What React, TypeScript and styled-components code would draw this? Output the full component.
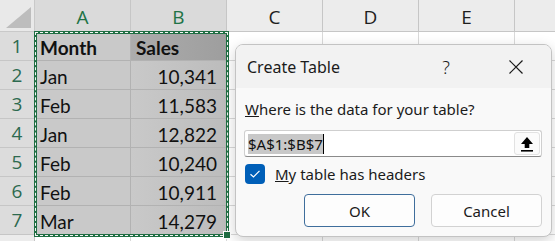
import styled, { createGlobalStyle } from 'styled-components';

const GlobalStyle = createGlobalStyle`
  html, body {
    margin: 0;
    padding: 0;
    background: #ffffff;
    overflow: hidden;
  }
`;

// F is off the right edge, so its header stays blank
const columns = ['A', 'B', 'C', 'D', 'E', ''];

const rows: [string, string][] = [
    ['Month', 'Sales'],
    ['Jan', '10,341'],
    ['Feb', '11,583'],
    ['Jan', '12,822'],
    ['Feb', '10,240'],
    ['Feb', '10,911'],
    ['Mar', '14,279'],
    ['', ''],
];

function App() {
    return (
        <Sheet>
            <GlobalStyle/>
            <Grid>
                <Corner/>
                {columns.map((c, i) => (
                    <ColHeader key={i} $selected={i < 2}>{c}</ColHeader>
                ))}
                {rows.map((r, ri) => (
                    <Row key={ri} r={r} index={ri}/>
                ))}
            </Grid>

            <Selection>
                <FillHandle/>
            </Selection>

            <Dialog>
                <TitleBar>
                    <Title>Create Table</Title>
                    <TitleButton>?</TitleButton>
                    <TitleButton>
                        <svg width="16" height="16" viewBox="0 0 16 16">
                            <path d="M1.5 1.5 L14.5 14.5 M14.5 1.5 L1.5 14.5" stroke="#1b1b1b" strokeWidth="1.2"/>
                        </svg>
                    </TitleButton>
                </TitleBar>
                <Body>
                    <Label><u>W</u>here is the data for your table?</Label>
                    <RangeBox>
                        <RangeText>$A$1:$B$7</RangeText>
                        <Caret/>
                        <CollapseButton>
                            <svg width="14" height="16" viewBox="0 0 14 16">
                                <path d="M7 1 L13 8 H9.3 V12 H4.7 V8 H1 Z" fill="#000"/>
                                <rect x="1" y="14" width="12" height="1.6" fill="#000"/>
                            </svg>
                        </CollapseButton>
                    </RangeBox>
                    <CheckRow>
                        <CheckBox>
                            <svg width="12" height="10" viewBox="0 0 12 10">
                                <path d="M1.5 5.2 L4.5 8 L10.5 1.8" stroke="#fff" strokeWidth="1.2" fill="none"/>
                            </svg>
                        </CheckBox>
                        <CheckLabel><u>M</u>y table has headers</CheckLabel>
                    </CheckRow>
                    <Buttons>
                        <Button $primary>OK</Button>
                        <Button>Cancel</Button>
                    </Buttons>
                </Body>
            </Dialog>
        </Sheet>
    );
}

function Row({r, index}: { r: [string, string]; index: number }) {
    const inSel = index < 7;
    return (
        <>
            <RowHeader $selected={inSel}>{inSel ? index + 1 : ''}</RowHeader>
            <Cell $selected={inSel} $bold={index === 0}>{r[0]}</Cell>
            <Cell $selected={inSel} $bold={index === 0} $active={index === 0} $num={index > 0} $shade={inSel}>{r[1]}</Cell>
            <Cell/>
            <Cell/>
            <Cell/>
            <Cell/>
        </>
    );
}

export default App;

const Sheet = styled.div`
  position: relative;
  width: 555px;
  height: 241px;
  overflow: hidden;
  font-family: Lato, "Liberation Sans", sans-serif;
`;

const Grid = styled.div`
  display: grid;
  grid-template-columns: 35px repeat(6, 96px);
  grid-template-rows: 32px repeat(8, 29px);
`;

const Corner = styled.div`
  position: relative;
  background: #e9e9e9;
  border-right: 1px solid #c9c9c9;
  border-bottom: 1px solid #c9c9c9;

  &::after {
    content: '';
    position: absolute;
    right: 3px;
    bottom: 3px;
    width: 0;
    height: 0;
    border-left: 25px solid transparent;
    border-bottom: 21px solid #bdbdbd;
  }
`;

const ColHeader = styled.div<{ $selected?: boolean }>`
  display: flex;
  align-items: center;
  justify-content: center;
  padding-top: 2px;
  box-sizing: border-box;
  font-family: "Open Sans", "Noto Sans", sans-serif;
  font-size: 19px;
  color: ${p => p.$selected ? '#217346' : '#1e1e1e'};
  background: ${p => p.$selected ? '#dadada' : '#ececec'};
  border-right: 1px solid #c6c6c6;
  border-bottom: 1px solid #c6c6c6;
`;

const RowHeader = styled.div<{ $selected?: boolean }>`
  display: flex;
  align-items: center;
  justify-content: center;
  font-family: "Open Sans", "Noto Sans", sans-serif;
  font-size: 19px;
  color: ${p => p.$selected ? '#2d6a4f' : '#333'};
  background: ${p => p.$selected ? '#dcdcdc' : '#ececec'};
  border-right: 1px solid #c6c6c6;
  border-bottom: 1px solid #c6c6c6;
`;

const Cell = styled.div<{ $selected?: boolean; $bold?: boolean; $num?: boolean; $active?: boolean; $shade?: boolean }>`
  display: flex;
  align-items: center;
  justify-content: ${p => p.$num ? 'flex-end' : 'flex-start'};
  padding: 2px 9px 0 5px;
  box-sizing: border-box;
  font-size: 19px;
  font-weight: ${p => p.$bold ? 700 : 400};
  color: #111;
  background: ${p => p.$active
          ? 'linear-gradient(90deg, #acacac, #9e9e9e)'
          : p.$shade
                  ? 'linear-gradient(90deg, #c9c9c9, #bcbcbc)'
                  : p.$selected ? '#c9c9c9' : '#ffffff'};
  border-right: 1px solid ${p => p.$selected ? '#b2b2b2' : '#d9d9d9'};
  border-bottom: 1px solid ${p => p.$selected ? '#b2b2b2' : '#d9d9d9'};
`;

const Selection = styled.div`
  position: absolute;
  left: 34px;
  top: 31px;
  width: 195px;
  height: 206px;
  box-sizing: border-box;
  border: 3px solid #1f6e43;
  pointer-events: none;

  &::before {
    content: '';
    position: absolute;
    inset: -2px;
    border: 1px dashed #f4f4f4;
  }
`;

const FillHandle = styled.div`
  position: absolute;
  right: -5px;
  bottom: -5px;
  width: 6px;
  height: 6px;
  background: #1f6e43;
  border: 1px solid #ffffff;
`;

const Dialog = styled.div`
  position: absolute;
  left: 235px;
  top: 44px;
  width: 317px;
  height: 193px;
  box-sizing: border-box;
  display: flex;
  flex-direction: column;
  background: #f9f9f9;
  border: 1px solid #c3c3c3;
  border-radius: 8px;
  box-shadow: 0 4px 14px rgba(0, 0, 0, 0.18);
  overflow: hidden;
  font-family: "Noto Sans", "Open Sans", sans-serif;
  color: #1b1b1b;
`;

const TitleBar = styled.div`
  height: 43px;
  display: flex;
  align-items: center;
  padding-left: 11px;
  background: #f2f2f2;
`;

const Title = styled.div`
  flex: 1;
  font-size: 16px;
`;

const TitleButton = styled.div`
  width: 70px;
  height: 43px;
  display: flex;
  align-items: center;
  justify-content: center;
  font-size: 18px;
  font-weight: 300;
  color: #1b1b1b;
`;

const Body = styled.div`
  flex: 1;
  display: flex;
  flex-direction: column;
  padding: 11px 9px 0 8px;
`;

const Label = styled.div`
  font-size: 15px;
  line-height: 20px;
  padding-left: 1px;
`;

const RangeBox = styled.div`
  margin-top: 11px;
  height: 27px;
  box-sizing: border-box;
  display: flex;
  align-items: center;
  padding-left: 3px;
  background: #ffffff;
  border: 1px solid #cfcfcf;
  border-bottom-color: #8a8a8a;
  border-radius: 3px;
`;

const RangeText = styled.span`
  font-size: 15px;
  line-height: 20px;
  background: #c8c8c8;
  color: #111;
`;

const Caret = styled.span`
  width: 1px;
  height: 20px;
  background: #000;
`;

const CollapseButton = styled.div`
  margin-left: auto;
  margin-right: 1px;
  width: 26px;
  height: 23px;
  box-sizing: border-box;
  display: flex;
  align-items: center;
  justify-content: center;
  background: #fbfbfb;
  border: 1px solid #e2e2e2;
  border-radius: 3px;
`;

const CheckRow = styled.div`
  margin-top: 7px;
  display: flex;
  align-items: center;
  gap: 10px;
`;

const CheckBox = styled.div`
  width: 20px;
  height: 20px;
  margin-left: 1px;
  display: flex;
  align-items: center;
  justify-content: center;
  background: #005fb8;
  border-radius: 4px;
`;

const CheckLabel = styled.div`
  font-size: 15px;
`;

const Buttons = styled.div`
  margin-top: 10px;
  display: flex;
  justify-content: flex-end;
  gap: 16px;
`;

const Button = styled.div<{ $primary?: boolean }>`
  width: 111px;
  height: 33px;
  box-sizing: border-box;
  display: flex;
  align-items: center;
  justify-content: center;
  font-size: 15px;
  background: #fdfdfd;
  border: 1px solid ${p => p.$primary ? '#3f6e9c' : '#d2d2d2'};
  border-radius: 4px;
`;
